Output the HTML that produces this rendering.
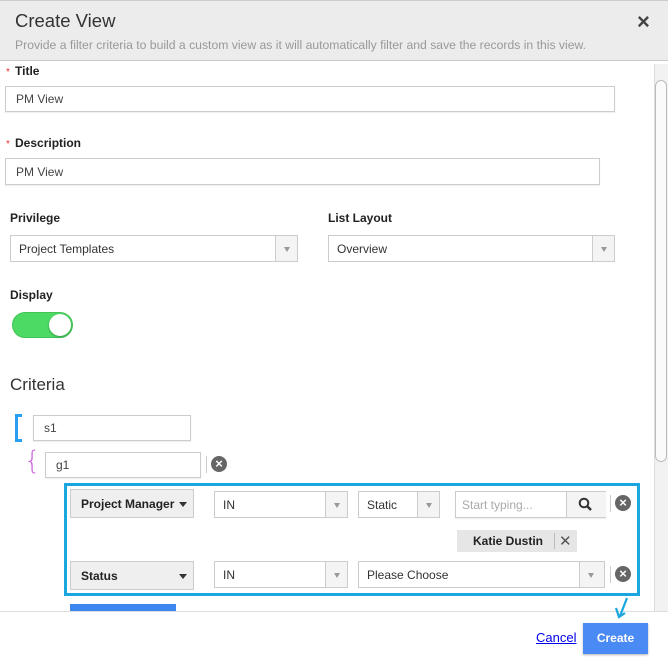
<!DOCTYPE html><html><head><style>
*{box-sizing:border-box;margin:0;padding:0}
body{width:668px;height:665px;position:relative;overflow:hidden;background:#fff;font-family:"Liberation Sans",sans-serif;font-size:12px;color:#333}
.a{position:absolute}
.hdr{left:0;top:0;width:668px;height:61px;background:#ececec;border-top:1px solid #ccc;border-bottom:1px solid #ccc}
.lbl{font-weight:bold;font-size:12px;color:#222}
.st{color:#e33;font-size:10px}
.inp{border:1px solid #ccc;background:#fff;padding-left:12px;display:flex;align-items:center;font-size:12px;color:#444;box-shadow:0 1px 1px rgba(0,0,0,.08)}
.sel{border:1px solid #ccc;background:#fff;padding-left:8px;display:flex;align-items:center;font-size:12px;color:#333}
.sel .ar{position:absolute;right:0;top:0;bottom:0;width:22px;border-left:1px solid #ccc;background:#f4f4f4}
.sel .ar:after{content:"";position:absolute;left:8px;top:50%;margin-top:-2px;border:3px solid transparent;border-top:5px solid #999}
.dd{background:#efefef;border:1px solid #ccc;font-weight:bold;padding-left:10px;display:flex;align-items:center;color:#222}
.dd:after{content:"";position:absolute;right:6px;top:50%;margin-top:-2px;border:4px solid transparent;border-top:5px solid #333}
.xc{width:16px;height:16px;border-radius:50%;background:#666;color:#fff;font-size:13px;font-weight:bold;text-align:center;line-height:16px}
.dv{width:1px;height:17px;background:#ccc}
</style></head><body>
<div class="a hdr"></div>
<div class="a" style="left:15px;top:10px;font-size:18.5px;color:#333">Create View</div>
<div class="a" style="left:15px;top:38px;font-size:12.2px;color:#999">Provide a filter criteria to build a custom view as it will automatically filter and save the records in this view.</div>
<div class="a" style="left:637px;top:9px;font-size:22px;font-weight:bold;color:#444">×</div>
<div class="a" style="left:654px;top:64px;width:14px;height:547px;background:#f2f2f2;border-left:1px solid #ddd"></div>
<div class="a" style="left:655px;top:80px;width:12px;height:382px;background:#fafafa;border:1px solid #bbb;border-radius:6px"></div>
<div class="a" style="left:6px;top:64px"><span class="st">*</span></div>
<div class="a lbl" style="left:15px;top:64px">Title</div>
<div class="a inp" style="left:5px;top:86px;width:610px;height:26px;padding-left:10px">PM View</div>
<div class="a" style="left:6px;top:136px"><span class="st">*</span></div>
<div class="a lbl" style="left:15px;top:136px">Description</div>
<div class="a inp" style="left:5px;top:158px;width:595px;height:27px;padding-left:10px">PM View</div>
<div class="a lbl" style="left:10px;top:211px">Privilege</div>
<div class="a lbl" style="left:328px;top:211px">List Layout</div>
<div class="a sel" style="left:10px;top:235px;width:288px;height:27px">Project Templates<div class="ar"></div></div>
<div class="a sel" style="left:328px;top:235px;width:287px;height:27px">Overview<div class="ar"></div></div>
<div class="a lbl" style="left:10px;top:288px">Display</div>
<div class="a" style="left:12px;top:312px;width:61px;height:26px;border-radius:13px;background:#4cd964;border:1px solid #44c458"></div>
<div class="a" style="left:49px;top:314px;width:22px;height:22px;border-radius:50%;background:#fff;box-shadow:0 1px 2px rgba(0,0,0,.3)"></div>
<div class="a" style="left:10px;top:375px;font-size:17px;color:#333">Criteria</div>
<div class="a" style="left:15px;top:414px;width:7px;height:28px;border:3px solid #2a9ef0;border-right:none"></div>
<div class="a inp" style="left:33px;top:415px;width:158px;height:26px;padding-left:10px">s1</div>
<div class="a" style="left:24px;top:446px;font-size:26px;color:#cc66dd;font-family:'DejaVu Sans',sans-serif;font-weight:200">{</div>
<div class="a inp" style="left:45px;top:452px;width:156px;height:26px;padding-left:10px">g1</div>
<div class="a dv" style="left:206px;top:456px"></div>
<div class="a xc" style="left:211px;top:456px">×</div>
<div class="a" style="left:64px;top:483px;width:576px;height:113px;border:3px solid #1aa7e0"></div>
<div class="a dd" style="left:70px;top:489px;width:124px;height:29px">Project Manager</div>
<div class="a sel" style="left:214px;top:491px;width:134px;height:27px">IN<div class="ar"></div></div>
<div class="a sel" style="left:358px;top:491px;width:82px;height:27px">Static<div class="ar"></div></div>
<div class="a inp" style="left:455px;top:491px;width:151px;height:27px;padding-left:6px;color:#aaa">Start typing...</div>
<div class="a" style="left:566px;top:492px;width:40px;height:25px;background:#f4f4f4;border-left:1px solid #ccc"></div>
<svg class="a" style="left:578px;top:497px" width="15" height="15" viewBox="0 0 15 15"><circle cx="6" cy="6" r="4.3" fill="none" stroke="#333" stroke-width="2"/><path d="M9 9l4 4" stroke="#333" stroke-width="2.5"/></svg>
<div class="a dv" style="left:610px;top:495px"></div>
<div class="a xc" style="left:615px;top:495px">×</div>
<div class="a" style="left:457px;top:530px;width:120px;height:22px;background:#e6e6e6;font-weight:bold;padding-left:16px;line-height:22px;color:#222">Katie Dustin</div>
<div class="a" style="left:554px;top:533px;width:1px;height:16px;background:#bbb"></div>
<div class="a" style="left:559px;top:532px;font-size:15px;color:#555">✕</div>
<div class="a dd" style="left:70px;top:561px;width:124px;height:29px">Status</div>
<div class="a sel" style="left:214px;top:561px;width:134px;height:27px">IN<div class="ar"></div></div>
<div class="a sel" style="left:358px;top:561px;width:247px;height:27px">Please Choose<div class="ar" style="width:25px"></div></div>
<div class="a dv" style="left:610px;top:566px"></div>
<div class="a xc" style="left:615px;top:566px">×</div>
<div class="a" style="left:70px;top:604px;width:106px;height:8px;background:#3d86f0"></div>
<div class="a" style="left:0;top:611px;width:668px;height:54px;background:#fff;border-top:1px solid #ddd"></div>
<svg class="a" style="left:612px;top:596px" width="18" height="24" viewBox="0 0 18 24"><path d="M15 2L8 20" stroke="#1aa7e0" stroke-width="2.2"/><path d="M4 12L7 21 13 17" fill="none" stroke="#1aa7e0" stroke-width="2.2"/></svg>
<div class="a" style="left:536px;top:630px;font-size:13px;color:#0000ee;text-decoration:underline">Cancel</div>
<div class="a" style="left:583px;top:623px;width:65px;height:31px;background:#4a8af4;color:#fff;font-weight:bold;font-size:12px;text-align:center;line-height:31px;box-shadow:0 1px 2px rgba(0,0,0,.3)">Create</div>
</body></html>
